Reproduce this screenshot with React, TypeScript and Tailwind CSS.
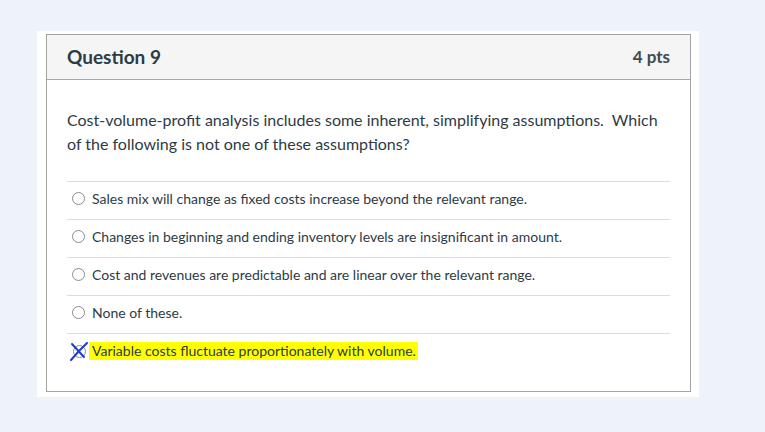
import React from "react";

const answers = [
  "Sales mix will change as fixed costs increase beyond the relevant range.",
  "Changes in beginning and ending inventory levels are insignificant in amount.",
  "Cost and revenues are predictable and are linear over the relevant range.",
  "None of these.",
];

function Radio() {
  return <span className="inline-block w-[13px] h-[13px] rounded-full border border-[#8c8c8c] bg-white shrink-0" />;
}

export default function App() {
  return (
    <div className="w-full h-[432px] bg-[#eef2f9] pt-[31px] pl-[37px]" style={{ fontFamily: "Lato, 'Open Sans', sans-serif" }}>
      <div className="w-[662px] h-[366px] bg-white pl-[9px] pt-[3px]">
        <div className="w-[645px] h-[358px] border border-[#a3a3a3] flex flex-col">
          <div className="h-[45px] bg-[#f5f5f5] border-b border-[#a8a8a8] px-[20px] flex items-center justify-between text-[#2d3b45]">
            <span className="text-[19px] font-bold">Question 9</span>
            <span className="text-[17px] font-bold text-[#3d4a53]">4 pts</span>
          </div>
          <div className="px-[20px] pt-[28px]">
            <p className="text-[16px] leading-[24px] text-[#2d3b45]">
              Cost-volume-profit analysis includes some inherent, simplifying assumptions.&nbsp; Which of the following is not one of these assumptions?
            </p>
            <div className="mt-[25px] border-t border-[#dcdcdc]">
              {answers.map((a) => (
                <div key={a} className="h-[38px] border-b border-[#dcdcdc] flex items-center pl-[5px] pb-[4px] gap-[7px] text-[14px] text-[#2d3b45]">
                  <Radio />
                  <span>{a}</span>
                </div>
              ))}
              <div className="h-[38px] flex items-center pl-[3px] pb-[4px] text-[14px] text-[#2d3b45]">
                <span className="relative w-[19px] h-[19px] shrink-0 flex items-center justify-center">
                  <span className="inline-block w-[13px] h-[13px] rounded-full border border-[#8c8c8c] bg-white" />
                  <svg className="absolute inset-0" width="19" height="19" viewBox="0 0 19 19">
                    <path d="M2 2 L14 15" stroke="#1f3bd8" strokeWidth="2" strokeLinecap="round" fill="none" />
                    <path d="M1 18 L9 9 L17 1" stroke="#1f3bd8" strokeWidth="2" strokeLinecap="round" fill="none" />
                  </svg>
                </span>
                <span className="bg-[#ffff00] pl-[3px] pr-[2px] py-[1px] leading-[16px]">Variable costs fluctuate proportionately with volume.</span>
              </div>
            </div>
          </div>
        </div>
      </div>
    </div>
  );
}
